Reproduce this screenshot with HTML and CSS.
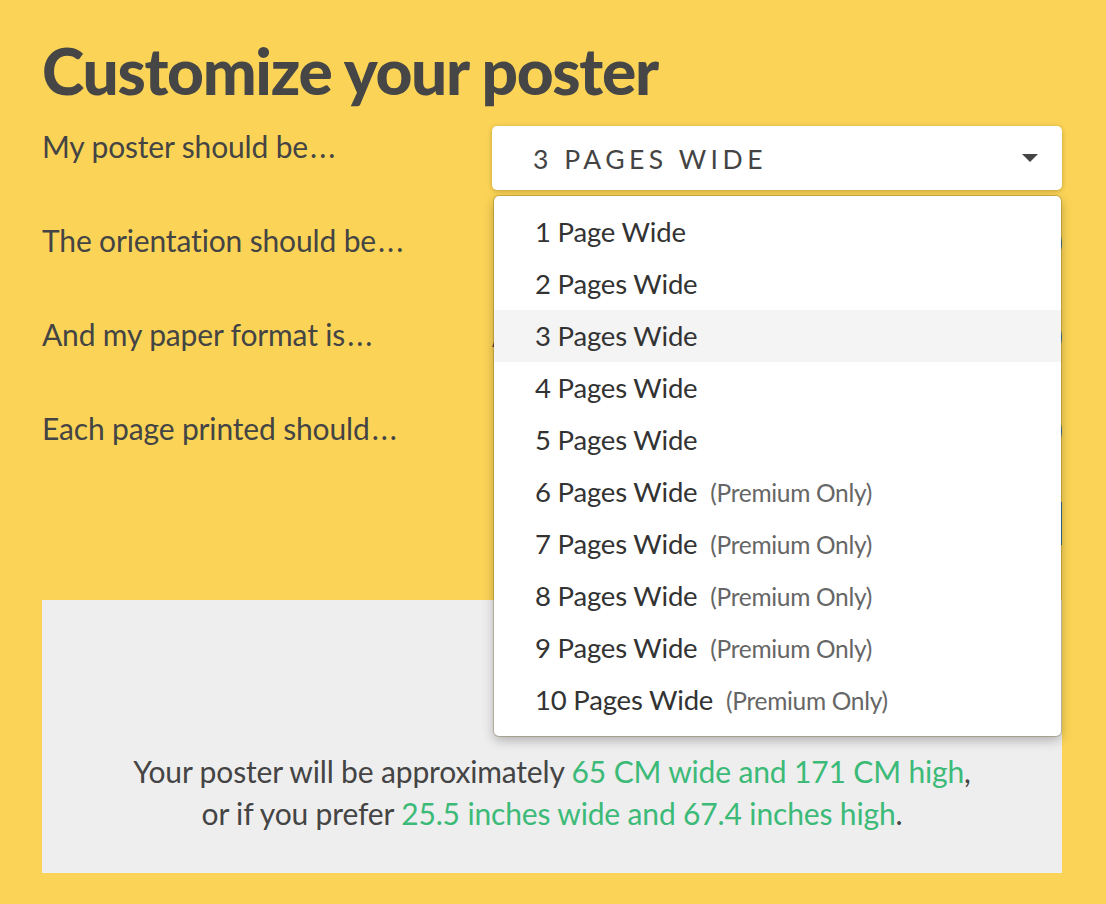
FILE: index.html
```html
<!DOCTYPE html>
<html lang="en">
<head>
<meta charset="utf-8">
<title>Customize your poster</title>
<link rel="stylesheet" href="styles.css">
</head>
<body>
<main class="page">
  <h1 class="title">Customize your poster</h1>
  <div class="form">
    <div class="row">
      <div class="label">My poster should be<span class="ell">...</span></div>
      <div class="control">
        <div class="select">
          <span class="select-value">3 PAGES WIDE</span>
          <span class="caret"></span>
          <ul class="menu">
            <li class="item">1 Page Wide</li>
            <li class="item">2 Pages Wide</li>
            <li class="item active">3 Pages Wide</li>
            <li class="item">4 Pages Wide</li>
            <li class="item">5 Pages Wide</li>
            <li class="item">6 Pages Wide <span class="premium">(Premium Only)</span></li>
            <li class="item">7 Pages Wide <span class="premium">(Premium Only)</span></li>
            <li class="item">8 Pages Wide <span class="premium">(Premium Only)</span></li>
            <li class="item">9 Pages Wide <span class="premium">(Premium Only)</span></li>
            <li class="item">10 Pages Wide <span class="premium">(Premium Only)</span></li>
          </ul>
        </div>
      </div>
    </div>
    <div class="row">
      <div class="label">The orientation should be<span class="ell">...</span></div>
      <div class="control">
        <div class="pills"><span class="pill on">Portrait</span><span class="pill">Landscape</span></div>
      </div>
    </div>
    <div class="row">
      <div class="label">And my paper format is<span class="ell">...</span></div>
      <div class="control split">
        <span class="format">A4</span>
        <div class="pills"><span class="pill on">A4</span><span class="pill">Letter</span></div>
      </div>
    </div>
    <div class="row">
      <div class="label">Each page printed should<span class="ell">...</span></div>
      <div class="control">
        <div class="pills"><span class="pill on">Have margins</span><span class="pill">Fill the page</span></div>
      </div>
    </div>
    <div class="actions">
      <button class="btn">Create my poster</button>
    </div>
  </div>
  <section class="result">
    <p class="summary">Your poster will be approximately <span class="hl">65 CM wide and 171 CM high</span>,<br>or if you prefer <span class="hl">25.5 inches wide and 67.4 inches high</span>.</p>
  </section>
</main>
</body>
</html>
```
FILE: styles.css
```css
html, body {
  margin: 0;
  padding: 0;
  background: #fbd457;
}
body {
  font-family: Lato, "Open Sans", sans-serif;
  color: #444444;
  height: 904px;
  overflow: hidden;
}
.page {
  width: 1020px;
  margin-left: 42px;
}
.title {
  margin: 33px 0 0;
  font-size: 64px;
  line-height: 76px;
  font-weight: 900;
  color: #464646;
  letter-spacing: -1.3px;
}
.form {
  margin-top: 17px;
}
.row {
  display: grid;
  grid-template-columns: 450px 570px;
  height: 64px;
  margin-bottom: 30px;
}
.label {
  font-size: 30px;
  line-height: 31px;
  padding-top: 5px;
  letter-spacing: -0.15px;
}
.ell {
  letter-spacing: 2px;
  margin-left: 2px;
}
.control {
  position: relative;
  display: flex;
  justify-content: flex-end;
}
.control.split {
  justify-content: space-between;
}
.format {
  font-size: 26px;
  line-height: 46px;
  margin-left: 0;
}
.select {
  position: relative;
  flex: 1;
  height: 64px;
  background: #ffffff;
  border-radius: 5px;
  box-shadow: 0 1px 5px rgba(90, 70, 0, 0.35);
  display: flex;
  align-items: center;
  padding: 0 24px 0 41px;
  box-sizing: border-box;
}
.select-value {
  flex: 1;
  font-size: 26.5px;
  letter-spacing: 4.5px;
  color: #444;
  padding-top: 1px;
}
.caret {
  width: 0;
  height: 0;
  border-left: 8px solid transparent;
  border-right: 8px solid transparent;
  border-top: 8px solid #444;
}
.menu {
  position: absolute;
  top: 70px;
  left: 2px;
  right: 1px;
  margin: 0;
  padding: 10px 0;
  list-style: none;
  background: #ffffff;
  border-radius: 5px;
  box-shadow: 0 0 0 1px rgba(90, 70, 0, 0.25), 0 4px 12px rgba(0, 0, 0, 0.28);
  z-index: 10;
}
.item {
  height: 52px;
  line-height: 52px;
  padding-left: 41px;
  font-size: 27.5px;
  color: #333;
  letter-spacing: -0.2px;
}
.item.active {
  background: #f4f4f4;
}
.premium {
  font-size: 24.5px;
  color: #666;
  margin-left: 6px;
  letter-spacing: -0.3px;
}
.pills {
  display: flex;
  width: 400px;
  height: 46px;
  border: 2px solid #1f75b9;
  border-radius: 23px;
  overflow: hidden;
  box-sizing: border-box;
}
.pill {
  flex: 1;
  display: flex;
  align-items: center;
  justify-content: center;
  font-size: 20px;
  color: #1f75b9;
}
.pill.on {
  background: #1f75b9;
  color: #fff;
}
.actions {
  display: flex;
  justify-content: flex-end;
}
.btn {
  width: 300px;
  height: 43px;
  border: 0;
  background: #1f75b9;
  color: #fff;
  font-family: Lato, sans-serif;
  font-size: 20px;
}
.result {
  margin-top: 55px;
  height: 273px;
  background: #eeeeee;
  box-sizing: border-box;
  padding-top: 150px;
}
.summary {
  margin: 0;
  text-align: center;
  font-size: 30px;
  line-height: 42px;
  color: #444;
  letter-spacing: -0.15px;
}
.hl {
  color: #3cba78;
}
```
